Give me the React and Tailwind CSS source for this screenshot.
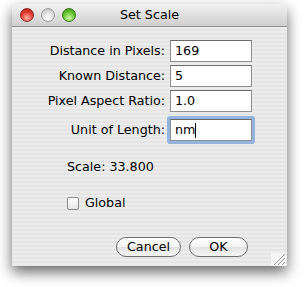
import React from 'react';

const Field = ({ label, value, focused }) => (
  <div className="flex items-center h-[22px]">
    <div className="w-[153px] text-right whitespace-nowrap">{label}</div>
    <div
      className={
        'ml-[5px] w-[82px] h-[22px] bg-white border border-[#8e8e8e] border-t-[#6a6a6a] flex items-center pl-[4px] ' +
        (focused ? 'ring-[3px] ring-[#93b4dd] rounded-[1px]' : '')
      }
    >
      <span>{value}</span>
      {focused && <span className="w-px h-[15px] bg-black" />}
    </div>
  </div>
);

const Light = ({ cls }) => (
  <div className={'w-[14px] h-[14px] rounded-full border ' + cls} />
);

const App = () => {
  return (
    <div className="w-[305px] h-[287px] bg-white pl-[12px] pt-[4px] font-['DejaVu_Sans',sans-serif] text-[12.7px] text-black">
      <div className="relative w-[275px] h-[262px] rounded-t-[5px] shadow-[0_6px_14px_rgba(0,0,0,0.6)] flex flex-col">
        {/* Title bar */}
        <div className="h-[23px] rounded-t-[5px] border-b border-[#8f8f8f] bg-[linear-gradient(to_bottom,#f2f2f2,#dcdcdc_60%,#cfcfcf)] flex items-center relative">
          <div className="flex items-center gap-[7px] pl-[8px]">
            <Light cls="border-[#8c3129] bg-[radial-gradient(circle_at_50%_75%,#ffb0a6,#e3392f_55%,#a01d15)]" />
            <Light cls="border-[#9c9c9c] bg-[radial-gradient(circle_at_50%_75%,#ffffff,#dedede_55%,#b4b4b4)]" />
            <Light cls="border-[#3d7a1f] bg-[radial-gradient(circle_at_50%_75%,#d4f7a8,#62c22e_55%,#3a8a12)]" />
          </div>
          <div className="absolute inset-0 flex items-center justify-center text-[12.7px] pointer-events-none">
            Set Scale
          </div>
        </div>

        {/* Body */}
        <div className="flex-1 flex flex-col bg-[repeating-linear-gradient(to_bottom,#ececec_0px,#ececec_2px,#e5e5e5_2px,#e5e5e5_4px)] pt-[13px]">
          <div className="flex flex-col gap-[3px]">
            <Field label="Distance in Pixels:" value="169" />
            <Field label="Known Distance:" value="5" />
            <Field label="Pixel Aspect Ratio:" value="1.0" />
          </div>
          <div className="mt-[7px]">
            <Field label="Unit of Length:" value="nm" focused />
          </div>

          <div className="mt-[18px] h-[16px] flex items-center pl-[55px]">Scale: 33.800</div>

          <div className="mt-[20px] h-[16px] flex items-center pl-[55px] gap-[6px]">
            <div className="w-[12px] h-[13px] rounded-[2px] border border-[#8a8a8a] bg-[linear-gradient(to_bottom,#ffffff,#e6e6e6)]" />
            <span>Global</span>
          </div>

          <div className="mt-[26px] flex justify-end gap-[8px] pr-[39px]">
            <button className="w-[65px] h-[20px] rounded-full border border-[#6e6e6e] bg-[linear-gradient(to_bottom,#ffffff,#f4f4f4_50%,#e2e2e2_51%,#f6f6f6)] flex items-center justify-center">
              Cancel
            </button>
            <button className="w-[59px] h-[20px] rounded-full border border-[#6e6e6e] bg-[linear-gradient(to_bottom,#ffffff,#f4f4f4_50%,#e2e2e2_51%,#f6f6f6)] flex items-center justify-center">
              OK
            </button>
          </div>
        </div>

        {/* resize grip */}
        <div className="absolute right-[1px] bottom-0 w-[15px] h-[13px] bg-[#f6f6f6]">
          <svg width="15" height="13" viewBox="0 0 15 13">
            <line x1="3" y1="12" x2="14" y2="1" stroke="#9a9a9a" strokeWidth="1" />
            <line x1="7" y1="12" x2="14" y2="5" stroke="#9a9a9a" strokeWidth="1" />
            <line x1="11" y1="12" x2="14" y2="9" stroke="#9a9a9a" strokeWidth="1" />
          </svg>
        </div>
      </div>
    </div>
  );
};

export default App;
